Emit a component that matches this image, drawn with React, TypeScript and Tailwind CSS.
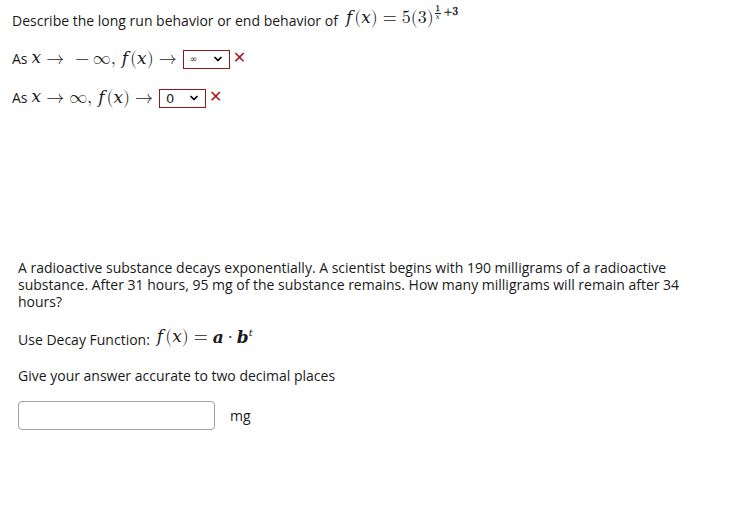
import { ChevronDown } from 'lucide-react';

const mathFont = { fontFamily: '"Latin Modern Math", "DejaVu Serif", serif' };
const letterFont = { fontFamily: '"DejaVu Serif", "Liberation Serif", serif' };

const M = ({ children, className = '' }: { children: React.ReactNode; className?: string }) => (
    <span className={`italic ${className}`} style={letterFont}>
        {children}
    </span>
);

const R = ({ children, className = '' }: { children: React.ReactNode; className?: string }) => (
    <span className={className} style={mathFont}>
        {children}
    </span>
);

const Fx = ({ gap = 'ml-[4px]' }: { gap?: string }) => (
    <span className={`text-[17px] ${gap}`}>
        <M>f</M>
        <R className="ml-[2px] text-[18px]">(</R>
        <M>x</M>
        <R className="text-[18px]">)</R>
    </span>
);

const Arrow = () => <R className="text-[18px] mx-[5px]">→</R>;

const Select = ({ value, small }: { value: string; small?: boolean }) => (
    <span className="inline-flex items-center justify-between w-[47px] h-[19px] border border-[#8b1a1a] bg-white pl-[6px] pr-[5px] align-middle">
        <span className={small ? 'text-[9px] leading-none' : 'text-[13px] leading-none'} style={{ fontFamily: '"DejaVu Sans", sans-serif' }}>
            {value}
        </span>
        <ChevronDown size={12} strokeWidth={3.5} className="text-black" />
    </span>
);

const Wrong = () => <span className="text-[#a8141c] text-[16px] font-bold ml-[3px] leading-none align-middle" style={{ fontFamily: '"DejaVu Sans", sans-serif' }}>✕</span>;

export default function App() {
    return (
        <div className="w-[748px] h-[532px] bg-white text-[#1a1a1a] text-[14px]" style={{ fontFamily: '"Open Sans", sans-serif' }}>
            <div className="px-[12px] pt-[9px]">
                <p className="h-[22px] flex items-end">
                    <span>Describe the long run behavior or end behavior of</span>
                    <Fx gap="ml-[8px]" />
                    <R className="text-[18px] mx-[5px]">=</R>
                    <R className="text-[18px]">5(3)</R>
                    <span className="relative -top-[10px] inline-flex items-center text-[11px]" style={mathFont}>
                        <span className="inline-flex flex-col items-center leading-none mx-[1px]">
                            <span className="text-[9px] font-bold">1</span>
                            <span className="border-t border-[#1a1a1a] w-[6px]"></span>
                            <span className="text-[7px] italic" style={letterFont}>x</span>
                        </span>
                        <span className="ml-[2px] font-bold">+3</span>
                    </span>
                </p>
                <div className="mt-[17px] flex items-center h-[20px]">
                    <span>As</span>
                    <M className="text-[17px] ml-[4px]">x</M>
                    <Arrow />
                    <R className="text-[18px] ml-[6px]">−&thinsp;∞,</R>
                    <span className="w-[2px]"></span>
                    <Fx />
                    <Arrow />
                    <span className="ml-[1px]"><Select value="∞" small /></span>
                    <Wrong />
                </div>
                <div className="mt-[19px] flex items-center h-[20px]">
                    <span>As</span>
                    <M className="text-[17px] ml-[4px]">x</M>
                    <Arrow />
                    <R className="text-[18px]">∞,</R>
                    <span className="w-[2px]"></span>
                    <Fx />
                    <Arrow />
                    <span className="ml-[1px]"><Select value="0" /></span>
                    <Wrong />
                </div>
            </div>

            <div className="px-[18px] mt-[152px]">
                <p className="leading-[17px] w-[680px]">
                    A radioactive substance decays exponentially. A scientist begins with 190 milligrams of a radioactive substance. After 31 hours, 95 mg of the substance remains. How many milligrams will remain after 34 hours?
                </p>
                <p className="mt-[13px] flex items-end">
                    <span>Use Decay Function:</span>
                    <Fx gap="ml-[7px]" />
                    <R className="text-[18px] mx-[5px]">=</R>
                    <M className="text-[17px] font-bold">a</M>
                    <R className="text-[18px] mx-[4px]">·</R>
                    <M className="text-[17px] font-bold">b</M>
                    <M className="text-[10px] relative -top-[10px]">t</M>
                </p>
                <p className="mt-[15px]">Give your answer accurate to two decimal places</p>
                <div className="mt-[15px] flex items-center">
                    <input type="text" className="w-[197px] h-[29px] border border-[#a0a0a0] rounded-[4px] outline-none" />
                    <span className="ml-[15px]">mg</span>
                </div>
            </div>
        </div>
    );
}
